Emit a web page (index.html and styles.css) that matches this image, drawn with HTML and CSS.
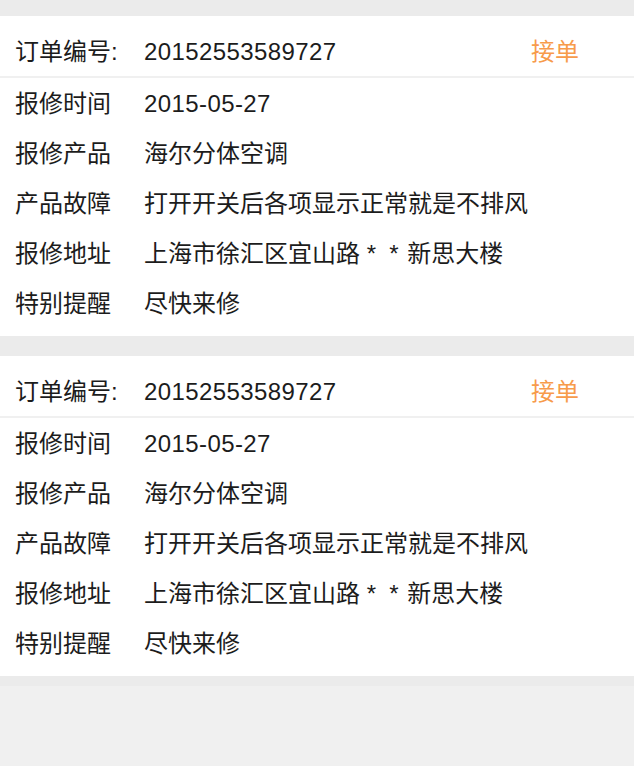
FILE: index.html
```
<!DOCTYPE html>
<html>
<head>
<meta charset="utf-8">
<link rel="stylesheet" href="styles.css">
</head>
<body>
<div class="list">
  <div class="card">
    <div class="head">
      <span class="label">订单编号:</span><span class="value num">20152553589727</span><span class="action">接单</span>
    </div>
    <div class="row"><span class="label">报修时间</span><span class="value num">2015-05-27</span></div>
    <div class="row"><span class="label">报修产品</span><span class="value">海尔分体空调</span></div>
    <div class="row"><span class="label">产品故障</span><span class="value">打开开关后各项显示正常就是不排风</span></div>
    <div class="row"><span class="label">报修地址</span><span class="value">上海市徐汇区宜山路 *&nbsp;&nbsp;*<span class="gap"> </span>新思大楼</span></div>
    <div class="row"><span class="label">特别提醒</span><span class="value">尽快来修</span></div>
  </div>
  <div class="card">
    <div class="head">
      <span class="label">订单编号:</span><span class="value num">20152553589727</span><span class="action">接单</span>
    </div>
    <div class="row"><span class="label">报修时间</span><span class="value num">2015-05-27</span></div>
    <div class="row"><span class="label">报修产品</span><span class="value">海尔分体空调</span></div>
    <div class="row"><span class="label">产品故障</span><span class="value">打开开关后各项显示正常就是不排风</span></div>
    <div class="row"><span class="label">报修地址</span><span class="value">上海市徐汇区宜山路 *&nbsp;&nbsp;*<span class="gap"> </span>新思大楼</span></div>
    <div class="row"><span class="label">特别提醒</span><span class="value">尽快来修</span></div>
  </div>
</div>
</body>
</html>
```
FILE: styles.css
```
html, body {
  margin: 0;
  padding: 0;
  background: #f0f0f0;
}
body {
  font-family: "Liberation Sans", "Noto Sans CJK SC", sans-serif;
  font-size: 24px;
  color: #1c1c1c;
}
.list {
  background: #ebebeb;
  padding: 16px 0 10px;
  display: flex;
  flex-direction: column;
  gap: 20px;
}
.card {
  background: #fff;
  padding-bottom: 8px;
}
.head {
  height: 60px;
  line-height: 71px;
  border-bottom: 2px solid #f0f0f0;
  padding-left: 15px;
  white-space: nowrap;
  overflow: hidden;
}
.row {
  height: 50px;
  line-height: 52px;
  padding-left: 15px;
  white-space: nowrap;
}
.label {
  display: inline-block;
  width: 129px;
}
.num {
  letter-spacing: 0.4px;
}
.gap {
  letter-spacing: 2px;
}
.head .value {
  display: inline-block;
  width: 387px;
}
.action {
  color: #f79b4b;
}
```
